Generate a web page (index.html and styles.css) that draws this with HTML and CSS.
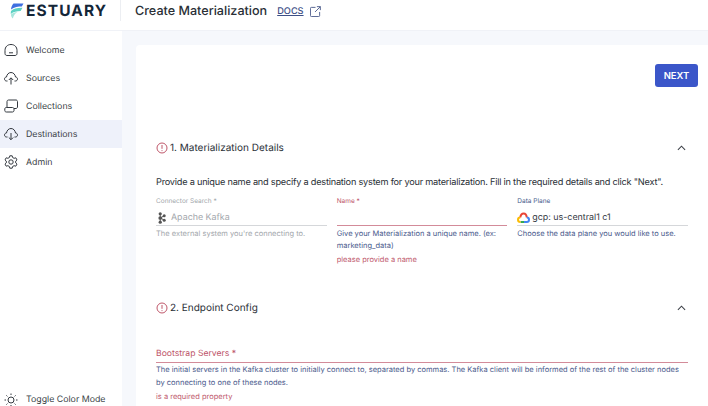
FILE: index.html
```html
<!DOCTYPE html>
<html lang="en">
<head>
<meta charset="utf-8">
<title>Create Materialization</title>
<link rel="stylesheet" href="styles.css">
</head>
<body>
<header class="topbar">
  <div class="brand">
    <svg class="logo" width="14" height="16" viewBox="0 0 14 16">
      <path d="M3.500 .5H13.500L11.800 3.500C8.500 3.500 4 3.800 1 6.500 1.200 4 2 2 3.500 .5Z" fill="#3f6fe0"/>
      <path d="M1 8C3.300 5.400 7.500 4.600 12.500 4.700L10.600 8C6.800 8 3.500 8.800 .8 11 .7 10 .8 9 1 8Z" fill="#5ed2c4"/>
      <path d="M.9 11.600C2.600 10 5 9 7.500 9 5.400 10.200 3.500 12.500 2.800 15.500 1.700 14.600 1.100 13.200 .9 11.600Z" fill="#a8e6dc"/>
    </svg>
    <span class="wordmark">ESTUARY</span>
  </div>
  <div class="title-area">
    <h1 class="page-title">Create Materialization</h1>
    <a class="docs" href="#">DOCS</a>
    <svg class="docs-icon" width="11" height="11" viewBox="0 0 12 12" fill="none" stroke="#4a5a8a" stroke-width="1">
      <path d="M6 1.500H1.500a1 1 0 0 0-1 1V10.500a1 1 0 0 0 1 1H9.500a1 1 0 0 0 1-1V6.500M7.500 .7H11.300V4.500M11.300 .7 5.500 6.500"/>
    </svg>
  </div>
</header>
<div class="shell">
  <nav class="sidebar">
    <ul class="nav-list">
      <li class="nav-item">
        <svg class="nav-icon" viewBox="0 0 14 14" fill="none" stroke="#33383f" stroke-width="1"><path d="M1 7.500C1 3.800 3.500 1.500 7 1.500S13 3.800 13 7.500V10.500C13 11.700 12.200 12.500 11 12.500H3C1.800 12.500 1 11.700 1 10.500ZM5 9.800H9"/></svg>
        <span>Welcome</span>
      </li>
      <li class="nav-item">
        <svg class="nav-icon" viewBox="0 0 14 14" fill="none" stroke="#33383f" stroke-width="1"><path d="M3.500 10H2.500C1.300 10 .5 9 .5 8 .5 6.900 1.300 6 2.500 6 2.800 3.500 4.600 1.500 7 1.500S11.200 3.500 11.500 6C12.700 6 13.500 6.900 13.500 8S12.700 10 11.500 10H10.500M7 13.500V7M4.800 9 7 6.800 9.200 9"/></svg>
        <span>Sources</span>
      </li>
      <li class="nav-item">
        <svg class="nav-icon" viewBox="0 0 14 14" fill="none" stroke="#33383f" stroke-width="1"><path d="M3 8V2.500C3 1.700 3.700 1 4.500 1H12C12.800 1 13.500 1.700 13.500 2.500V8C13.500 8.800 12.800 9.500 12 9.500H10M.8 10C.8 9.200 1.300 8.500 2.200 8.500H8.500C9.500 8.500 10 9.200 10 10V11.500C10 12.400 9.400 13 8.500 13H2.300C1.400 13 .8 12.400 .8 11.500Z"/></svg>
        <span>Collections</span>
      </li>
      <li class="nav-item nav-item-active">
        <svg class="nav-icon" viewBox="0 0 14 14" fill="none" stroke="#33383f" stroke-width="1"><path d="M3.500 10H2.500C1.300 10 .5 9 .5 8 .5 6.900 1.300 6 2.500 6 2.800 3.500 4.600 1.500 7 1.500S11.200 3.500 11.500 6C12.700 6 13.500 6.900 13.500 8S12.700 10 11.500 10H10.500M7 6V12.500M4.800 10.500 7 12.700 9.200 10.500"/></svg>
        <span>Destinations</span>
      </li>
      <li class="nav-item">
        <svg class="nav-icon" viewBox="0 0 14 14" fill="none" stroke="#33383f" stroke-width="1"><circle cx="7" cy="7" r="2.200"/><path d="M5.800 .8H8.200L8.600 2.500 10.100 3.300 11.800 2.800 13 4.900 11.700 6.100V7.900L13 9.100 11.800 11.200 10.100 10.700 8.600 11.500 8.200 13.200H5.800L5.400 11.500 3.900 10.700 2.200 11.200 1 9.100 2.300 7.900V6.100L1 4.900 2.200 2.800 3.900 3.300 5.400 2.500Z"/></svg>
        <span>Admin</span>
      </li>
    </ul>
    <div class="nav-item nav-toggle">
      <svg class="nav-icon" viewBox="0 0 14 14" fill="none" stroke="#33383f" stroke-width="1"><circle cx="7" cy="7" r="3"/><path d="M7 .5V2M7 12V13.500M.5 7H2M12 7H13.500M2.400 2.400 3.400 3.400M10.600 10.600 11.600 11.600M2.400 11.600 3.400 10.600M10.600 3.400 11.600 2.400"/></svg>
      <span>Toggle Color Mode</span>
    </div>
  </nav>
  <main class="content">
    <section class="card">
      <div class="actions"><button class="next-btn" type="button">NEXT</button></div>
      <div class="section-head head-one">
        <svg class="alert" viewBox="0 0 12 12" fill="none" stroke="#b8455a" stroke-width=".9"><circle cx="6" cy="6" r="5"/><path d="M6 3V6.800M6 8.200V9.100"/></svg>
        <h2 class="section-title">1. Materialization Details</h2>
        <svg class="chevron" viewBox="0 0 10 6" fill="none" stroke="#3c4148" stroke-width="1.200"><path d="M1 5 5 1 9 5"/></svg>
      </div>
      <p class="intro">Provide a unique name and specify a destination system for your materialization. Fill in the required details and click "Next".</p>
      <div class="fields">
        <div class="field field-disabled">
          <label class="field-label">Connector Search *</label>
          <div class="field-input">
            <svg class="kafka" width="8" height="12" viewBox="0 0 9 13" fill="#555"><circle cx="2.500" cy="1.800" r="1.800"/><circle cx="2.500" cy="6.500" r="2.100"/><circle cx="2.500" cy="11.200" r="1.800"/><circle cx="7" cy="4" r="1.700"/><circle cx="7" cy="9" r="1.700"/><path d="M2 2H3V11H2ZM3 6 6.500 3.500 7 4.300 3.500 6.800ZM3.500 6.200 7 8.500 6.500 9.300 3 7Z"/></svg>
            <span>Apache Kafka</span>
          </div>
          <p class="help">The external system you're connecting to.</p>
        </div>
        <div class="field field-error">
          <label class="field-label">Name *</label>
          <div class="field-input"></div>
          <p class="help help-blue">Give your Materialization a unique name. (ex: marketing_data)</p>
          <p class="error-text">please provide a name</p>
        </div>
        <div class="field">
          <label class="field-label label-blue">Data Plane</label>
          <div class="field-input field-input-flush">
            <svg class="cloud" width="13" height="11" viewBox="0 0 13 11" fill="none" stroke-width="2"><path d="M3.300 5.500C3.600 3 5 1.500 6.700 1.500 8.300 1.500 9.500 3 9.800 5.500" stroke="#ea4335"/><path d="M9.800 5.500C11 5.500 12 6.500 12 7.800S11.200 10 9.800 10H7" stroke="#4285f4"/><path d="M3.500 10H7" stroke="#34a853"/><path d="M3.500 10C2 10 1 9 1 7.800 1 6.600 2 5.500 3.300 5.500" stroke="#fbbc05"/></svg>
            <span class="value">gcp: us-central1 c1</span>
          </div>
          <p class="help help-blue">Choose the data plane you would like to use.</p>
        </div>
      </div>
      <div class="section-head head-two">
        <svg class="alert" viewBox="0 0 12 12" fill="none" stroke="#b8455a" stroke-width=".9"><circle cx="6" cy="6" r="5"/><path d="M6 3V6.800M6 8.200V9.100"/></svg>
        <h2 class="section-title">2. Endpoint Config</h2>
        <svg class="chevron" viewBox="0 0 10 6" fill="none" stroke="#3c4148" stroke-width="1.200"><path d="M1 5 5 1 9 5"/></svg>
      </div>
      <div class="bootstrap">
        <label class="bootstrap-label">Bootstrap Servers *</label>
        <p class="help help-blue help-wide">The initial servers in the Kafka cluster to initially connect to, separated by commas. The Kafka client will be informed of the rest of the cluster nodes by connecting to one of these nodes.</p>
        <p class="error-text">is a required property</p>
      </div>
    </section>
  </main>
</div>
</body>
</html>
```
FILE: styles.css
```css
* { box-sizing: border-box; }
html, body { height: 100%; }
body {
  margin: 0;
  overflow: hidden;
  background: #fff;
  color: #2b3038;
  font-family: Inter, "Liberation Sans", sans-serif;
  text-rendering: geometricPrecision;
}
.topbar {
  display: flex;
  align-items: flex-start;
  height: 31px;
  background: #fff;
  border-bottom: 1px solid #f0f2f7;
}
.brand {
  display: flex;
  align-items: center;
  gap: 2px;
  width: 121px;
  height: 21px;
  padding-left: 10px;
  border-right: 1px solid #eceef2;
}
.wordmark {
  font-size: 15.500px;
  font-weight: 700;
  letter-spacing: 1.100px;
  color: #142638;
  line-height: 20px;
}
.title-area {
  display: flex;
  align-items: center;
  height: 23px;
  padding-left: 14px;
}
.page-title {
  margin: 0;
  font-size: 12.600px;
  font-weight: 500;
  color: #2a2f36;
}
.docs {
  margin-left: 10px;
  font-size: 9.200px;
  font-weight: 500;
  color: #3d4f86;
  text-decoration: underline;
}
.docs-icon { margin-left: 6px; }
.shell {
  display: flex;
  height: 375px;
}
.sidebar {
  display: flex;
  flex-direction: column;
  flex: none;
  width: 122px;
  padding-top: 5px;
  background: #fff;
}
.nav-list {
  flex: 1;
  margin: 0;
  padding: 0;
  list-style: none;
}
.nav-item {
  display: flex;
  align-items: center;
  gap: 8.500px;
  height: 28.100px;
  padding-left: 3.500px;
  font-size: 8.800px;
  color: #3a3f46;
}
.nav-item-active { background: #eef1fa; }
.nav-icon { flex: none; width: 14px; height: 14px; }
.nav-toggle { height: 14px; padding-top: 1px; }
.content {
  flex: 1;
  min-width: 0;
  padding: 14px 0 0 14px;
  background: #f6f8fc;
}
.card {
  height: 100%;
  padding: 19px 20px 0 20px;
  background: #fff;
  border-radius: 4px 0 0 0;
}
.actions { display: flex; justify-content: flex-end; margin-right: -10px; }
.next-btn {
  width: 43px;
  height: 23px;
  padding: 0;
  border: 0;
  border-radius: 3px;
  background: #3b56c9;
  color: #fff;
  font: 600 9.500px Inter, sans-serif;
}
.section-head {
  display: flex;
  align-items: center;
  height: 16px;
}
.head-one { margin-top: 53px; }
.head-two { margin-top: 32px; }
.alert { flex: none; width: 12px; height: 12px; margin-right: 2px; }
.section-title {
  flex: 1;
  margin: 0;
  font-size: 10px;
  font-weight: 400;
  color: #2b3038;
}
.chevron { flex: none; width: 9px; height: 6px; margin-right: 2px; }
.intro {
  margin: 20px 0 0;
  font-size: 9.200px;
  letter-spacing: -.225px;
  line-height: 14px;
  color: #2a2f36;
  white-space: nowrap;
}
.fields {
  display: grid;
  grid-template-columns: repeat(3, 1fr);
  gap: 10px;
  margin-top: 6px;
  height: 72px;
}
.field-label {
  display: block;
  height: 12px;
  font-size: 6.500px;
  line-height: 11px;
  color: #a3a7ac;
}
.field-error .field-label { color: #bd5468; }
.label-blue { color: #47598c; }
.field-input {
  display: flex;
  align-items: center;
  height: 18px;
  padding: 2px 0 0 2px;
  border-bottom: 1px solid #d5d7da;
  font-size: 8.900px;
  color: #a3a7ac;
}
.field-input-flush { padding-left: 0; }
.field-error .field-input { border-bottom-color: #d38b99; }
.kafka { margin-right: 5px; }
.cloud { margin-right: 2px; }
.value { color: #33383f; }
.help {
  margin: 2px 0 0;
  font-size: 7.500px;
  line-height: 12px;
  color: #a3a7ac;
}
.help-blue { color: #4a5a8c; }
.help-wide { margin-top: 0; line-height: 13px; }
.error-text {
  margin: 1px 0 0;
  font-size: 7.500px;
  line-height: 14px;
  color: #c05a6e;
}
.bootstrap { margin-top: 33px; }
.bootstrap-label {
  display: block;
  height: 14px;
  border-bottom: 1px solid #d38b99;
  font-size: 8.650px;
  line-height: 10px;
  color: #bd5468;
}
```
